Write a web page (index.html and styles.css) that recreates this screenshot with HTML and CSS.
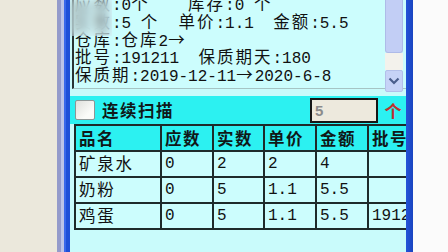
FILE: index.html
```html
<!DOCTYPE html>
<html>
<head>
<meta charset="utf-8">
<link rel="stylesheet" href="styles.css">
</head>
<body>
<div class="desk"></div>
<div class="win">
  <div class="frame-l"></div>
  <div class="client">
    <div class="info">
      <div class="memo">
        <div class="lines">
          <div class="ln"><span class="c">应数</span>:0<span class="c">个</span>    <span class="c">库存</span>:0 <span class="c">个</span></div>
          <div class="ln"><span class="c">实数</span>:5 <span class="c">个</span>  <span class="c">单价</span>:1.1  <span class="c">金额</span>:5.5</div>
          <div class="ln"><span class="c">仓库</span>:<span class="c">仓库</span>2<span class="c">→</span></div>
          <div class="ln"><span class="c">批号</span>:191211  <span class="c">保质期天</span>:180</div>
          <div class="ln"><span class="c">保质期</span>:2019-12-11<span class="c">→</span>2020-6-8</div>
        </div>
      </div>
      <div class="vscroll">
        <div class="thumb"></div>
        <div class="track"></div>
        <div class="btn">
          <svg width="12" height="8" viewBox="0 0 12 8"><path d="M1.5 1.5 L6 6 L10.5 1.5" fill="none" stroke="#4a5f8c" stroke-width="2.2"/></svg>
        </div>
      </div>
    </div>
    <div class="bar">
      <div class="chk"></div>
      <span class="lbl">连续扫描</span>
      <div class="num">5</div>
      <span class="up">个</span>
    </div>
    <table class="grid">
      <colgroup><col class="w1"><col class="w2"><col class="w3"><col class="w4"><col class="w5"><col class="w6"></colgroup>
      <thead>
        <tr><th>品名</th><th>应数</th><th>实数</th><th>单价</th><th>金额</th><th>批号</th></tr>
      </thead>
      <tbody>
        <tr><td class="c">矿泉水</td><td>0</td><td>2</td><td>2</td><td>4</td><td></td></tr>
        <tr><td class="c">奶粉</td><td>0</td><td>5</td><td>1.1</td><td>5.5</td><td></td></tr>
        <tr><td class="c">鸡蛋</td><td>0</td><td>5</td><td>1.1</td><td>5.5</td><td>191211</td></tr>
      </tbody>
    </table>
    <div class="mosaic"></div>
  </div>
  <div class="frame-r"></div>
</div>
<div class="rest"></div>
</body>
</html>
```
FILE: styles.css
```css
html, body {
  margin: 0;
  padding: 0;
}
body {
  width: 448px;
  height: 252px;
  overflow: hidden;
  display: flex;
  font-family: "Liberation Mono", "Noto Sans CJK SC", monospace;
  font-size: 16px;
  color: #111;
}
.desk {
  width: 57px;
  background: #ebe8dc;
}
.win {
  width: 356px;
  display: flex;
}
.frame-l {
  width: 13px;
  background: linear-gradient(to right, #949bcb 0 4px, #bcc3e8 4px 7px, #3a68ea 7px 9px, #1f4fd8 9px 13px);
}
.frame-r {
  width: 7px;
  background: linear-gradient(to right, #2353d8, #1a44c0);
}
.rest {
  flex: 1;
  background: #fbfbfb;
}
.client {
  width: 336px;
  background: #c9fbfb;
  display: flex;
  flex-direction: column;
  overflow: hidden;
  position: relative;
}
.info {
  margin-left: 2px;
  height: 88px;
  border-left: 2px solid #2a3434;
  border-bottom: 1px solid #a6c4c4;
  display: flex;
  background: #ccfdfd;
}
.memo {
  flex: 1;
  overflow: hidden;
  padding-left: 1px;
}
.lines {
  margin-top: -5px;
}
.ln {
  height: 17.8px;
  line-height: 17.8px;
  white-space: pre;
}
.c {
  font-family: "Noto Sans CJK SC", sans-serif;
  font-size: 16.5px;
  letter-spacing: 2px;
  line-height: 17.8px;
}
.vscroll {
  width: 18px;
  height: 92px;
  margin-right: 3px;
  display: flex;
  flex-direction: column;
  align-self: flex-start;
  position: relative;
  z-index: 1;
}
.thumb {
  height: 53px;
  background: #c2cef5;
  border: 1px solid #aebbe8;
  border-top: none;
  border-radius: 0 0 3px 3px;
  box-sizing: border-box;
}
.track {
  height: 17px;
  background: #f3f2ec;
}
.btn {
  height: 22px;
  background: #c6d3f7;
  border: 1px solid #b3c0ea;
  border-radius: 2px;
  box-sizing: border-box;
  display: flex;
  align-items: center;
  justify-content: center;
}
.bar {
  margin-top: 7px;
  height: 28px;
  background: #2cf1f1;
  display: flex;
  align-items: center;
}
.chk {
  width: 20px;
  height: 20px;
  margin-left: 5px;
  box-sizing: border-box;
  border: 1px solid #8d9696;
  background: linear-gradient(135deg, #dfe0dc, #fbfbf8 70%);
  border-radius: 2px;
}
.lbl {
  margin-left: 7px;
  font-family: "Noto Sans CJK SC", sans-serif;
  font-weight: bold;
  font-size: 16.5px;
  letter-spacing: 1.5px;
  color: #101818;
}
.num {
  margin-left: auto;
  width: 68px;
  height: 25px;
  box-sizing: border-box;
  border: 2px solid #161616;
  background: #ede9dd;
  color: #8c8c8c;
  font-family: "Liberation Sans", sans-serif;
  font-weight: bold;
  font-size: 15px;
  line-height: 21px;
  padding-left: 3px;
}
.up {
  width: 20px;
  margin-left: 5px;
  margin-right: 3px;
  text-align: center;
  font-family: "Noto Sans CJK SC", sans-serif;
  font-weight: bold;
  font-size: 17px;
  color: #c0302c;
}
.grid {
  margin-left: 4px;
  margin-top: 0;
  border-collapse: collapse;
  table-layout: fixed;
  width: 363px;
  flex-shrink: 0;
}
.w1 { width: 86px; }
.w2 { width: 52px; }
.w3 { width: 51px; }
.w4 { width: 52px; }
.w5 { width: 52px; }
.w6 { width: 70px; }
.grid th, .grid td {
  border: 2px solid #1e2a2a;
  padding: 0 3px;
  text-align: left;
  white-space: nowrap;
  overflow: hidden;
  height: 24px;
}
.grid th {
  background: #2cf1f1;
  font-family: "Noto Sans CJK SC", sans-serif;
  font-weight: bold;
  font-size: 16.5px;
  letter-spacing: 1.5px;
  color: #101818;
}
.grid td {
  background: #ccfdfd;
  font-size: 16px;
}
.grid td.c {
  font-size: 16.5px;
  letter-spacing: 1.8px;
}
.mosaic {
  position: absolute;
  left: 0;
  top: 0;
  width: 42px;
  height: 36px;
  backdrop-filter: blur(4px);
  background: rgba(235, 245, 255, 0.35);
}
```
